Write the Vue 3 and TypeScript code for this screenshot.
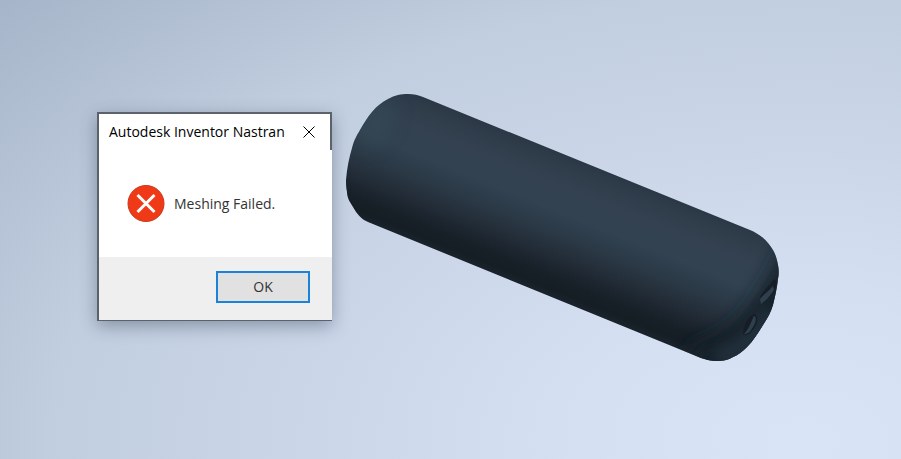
<script setup lang="ts">
import { ref } from 'vue'

const title = 'Autodesk Inventor Nastran'
const message = 'Meshing Failed.'
const open = ref(true)

function close(): void {
  open.value = false
}
</script>

<template>
  <main class="viewport">
    <svg class="model" viewBox="0 0 901 459" aria-hidden="true">
      <defs>
        <linearGradient id="barrel" gradientUnits="userSpaceOnUse" x1="565" y1="155" x2="514" y2="281">
          <stop offset="0" stop-color="#2b3744" />
          <stop offset="0.08" stop-color="#2f3d4b" />
          <stop offset="0.22" stop-color="#334150" />
          <stop offset="0.4" stop-color="#324251" />
          <stop offset="0.56" stop-color="#2b3946" />
          <stop offset="0.72" stop-color="#222c37" />
          <stop offset="0.87" stop-color="#171f27" />
          <stop offset="0.95" stop-color="#151d25" />
          <stop offset="1" stop-color="#1a222b" />
        </linearGradient>
        <clipPath id="outline">
          <path d="M346 180C347 168 349 158 352 148C354 140 357 135 360 130C364 123 367 118 372 112C377 106 382 102 388 99C395 95 401 94 408 94C414 94 418 95 423 97L750 230C755 232 758 234 762 237C767 241 770 245 773 250C776 255 777 260 778 265C779 270 779 274 778 279C777 288 775 297 773 305C771 312 767 319 763 325C758 333 753 341 747 347C743 351 738 355 733 357C728 360 722 361 717 361C711 361 707 360 701 358L368 222C361 219 357 214 353 207C349 201 347 197 347 192C346 188 346 184 346 180Z" />
        </clipPath>
        <filter id="soft" filterUnits="userSpaceOnUse" x="320" y="60" width="520" height="360">
          <feGaussianBlur stdDeviation="9" />
        </filter>
        <filter id="softer" filterUnits="userSpaceOnUse" x="320" y="60" width="520" height="360">
          <feGaussianBlur stdDeviation="6" />
        </filter>
      </defs>
      <g clip-path="url(#outline)">
        <path class="barrel" d="M330 80H790V370H330Z" />
        <ellipse class="shoulder" cx="377" cy="124" rx="15" ry="24" transform="rotate(28 377 124)" filter="url(#soft)" />
        <path class="cap-shade" d="M790 232C775 266 762 287 750 304C736 324 718 337 690 346L680 400L820 400L820 232Z" filter="url(#soft)" />
        <path class="cap-light" d="M771 312C757 335 742 350 717 358" filter="url(#softer)" />
        <path class="recess" d="M760 297C763 291 769 286 774 279L777 282L774 293L763 304Z" />
        <path class="slot" d="M760 299C764 294 770 290 773 286L774 290C770 296 766 301 761 304Z" />
        <path class="recess" d="M743 333C744 324 748 317 754 314C758 315 758 322 755 327C752 332 748 335 744 335Z" />
        <path class="slot" d="M744 334C749 329 751 322 754 316C757 317 756 323 753 327C750 332 748 334 744 334Z" />
      </g>
    </svg>

    <section v-if="open" class="dialog" role="alertdialog" aria-labelledby="dialog-title" aria-describedby="dialog-message">
      <header class="titlebar">
        <h1 id="dialog-title" class="title">{{ title }}</h1>
        <button class="close" type="button" aria-label="Close" @click="close">
          <svg class="close-icon" viewBox="0 0 12 12" aria-hidden="true">
            <path d="M0.5 0.5L11.5 11.5M11.5 0.5L0.5 11.5" />
          </svg>
        </button>
      </header>
      <div class="content">
        <svg class="error-icon" viewBox="0 0 38 38" aria-hidden="true">
          <circle cx="19" cy="18.5" r="18" />
          <path d="M10.5 10L27.5 27M27.5 10L10.5 27" />
        </svg>
        <p id="dialog-message" class="message">{{ message }}</p>
      </div>
      <footer class="actions">
        <button class="ok" type="button" @click="close">OK</button>
      </footer>
    </section>
  </main>
</template>

<style>
body {
  margin: 0;
}
</style>

<style scoped>
.viewport {
  position: relative;
  min-height: 100vh;
  overflow: hidden;
  background: radial-gradient(
    ellipse 111% 131% at 89% 96%,
    #d9e4f6 0%,
    #d4dff1 25%,
    #cbd7e9 48%,
    #c1cedf 75%,
    #b8c5d8 86%,
    #a6b5c9 108%
  );
  font-family: "Open Sans", "Noto Sans", sans-serif;
}

.model {
  position: absolute;
  inset: 0;
  width: 100%;
  height: 100%;
}

.barrel {
  fill: url(#barrel);
}

.shoulder {
  fill: #354857;
  opacity: 0.7;
}

.cap-shade {
  fill: #18202a;
}

.cap-light {
  fill: none;
  stroke: #263442;
  stroke-width: 16;
  opacity: 0.8;
}

.recess {
  fill: #151d26;
}

.slot {
  fill: #303f4e;
}

.dialog {
  position: absolute;
  top: 112px;
  left: 97px;
  box-sizing: border-box;
  width: 235px;
  border: solid #5b626b;
  border-width: 2px 0 1px 2px;
  background: #fff;
  box-shadow: 0 5px 16px rgba(40, 52, 75, 0.4);
}

.titlebar {
  display: flex;
  align-items: center;
  justify-content: space-between;
  height: 36px;
  padding-left: 10px;
  padding-right: 8px;
  border-right: 2px solid #5b626b;
}

.title {
  margin: 0;
  color: #000;
  font-size: 14px;
  font-weight: 400;
  line-height: 20px;
  white-space: nowrap;
}

.close {
  display: grid;
  place-items: center;
  width: 26px;
  height: 26px;
  padding: 0;
  border: 0;
  background: transparent;
}

.close-icon {
  width: 12px;
  height: 12px;
  fill: none;
  stroke: #000;
  stroke-width: 1;
}

.content {
  display: flex;
  align-items: center;
  gap: 9px;
  height: 107px;
  padding-left: 28px;
}

.error-icon {
  width: 38px;
  height: 38px;
  fill: #f03a17;
  stroke: #c83a20;
  stroke-width: 1;
}

.error-icon path {
  fill: none;
  stroke: #fff;
  stroke-width: 3;
}

.message {
  margin: 0;
  color: #333;
  font-size: 14px;
  line-height: 20px;
}

.actions {
  display: flex;
  align-items: center;
  justify-content: flex-end;
  height: 63px;
  padding: 0 22px;
  background: #efefef;
}

.ok {
  width: 94px;
  height: 32px;
  margin-bottom: 4px;
  padding: 0;
  border: 2px solid #1a82d8;
  background: #e1e1e1;
  color: #333;
  font: 14px/20px "Open Sans", "Noto Sans", sans-serif;
}
</style>
